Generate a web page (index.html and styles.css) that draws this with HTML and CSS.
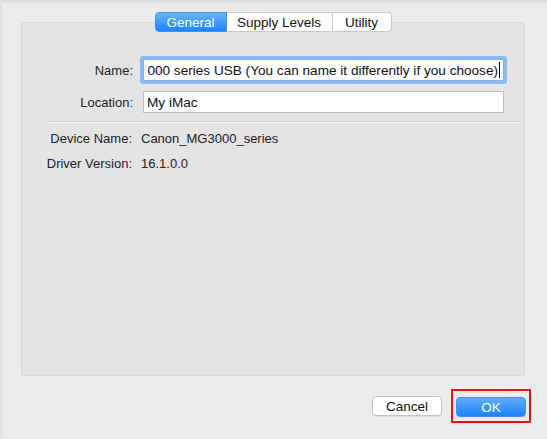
FILE: index.html
```html
<!DOCTYPE html>
<html lang="en">
  <head>
    <meta charset="UTF-8" />
    <meta name="viewport" content="width=device-width, initial-scale=1.0" />
    <title>Printer Options</title>
    <link rel="stylesheet" href="styles.css">
  </head>
  <body>
    <div class="window">
      <div class="tabs">
        <div class="tab active">General</div>
        <div class="tab supply">Supply Levels</div>
        <div class="tab utility">Utility</div>
      </div>
      <div class="panel">
        <div class="form">
          <label class="label">Name:</label>
          <div class="field focused">
            <div class="field-scroll"><span class="field-text" dir="ltr">Canon MG3000 series USB (You can name it differently if you choose)</span></div>
            <span class="caret"></span>
          </div>
          <label class="label">Location:</label>
          <div class="field">
            <span class="field-text start">My iMac</span>
          </div>
        </div>
        <div class="separator"></div>
        <div class="info">
          <div class="info-label">Device Name:</div>
          <div class="info-value">Canon_MG3000_series</div>
          <div class="info-label">Driver Version:</div>
          <div class="info-value">16.1.0.0</div>
        </div>
      </div>
      <div class="buttons">
        <button class="btn">Cancel</button>
        <div class="highlight">
          <button class="btn primary">OK</button>
        </div>
      </div>
    </div>
  </body>
</html>
```

FILE: styles.css
```css
html,
body {
  margin: 0;
  height: 100%;
}

body {
  font-family: "Liberation Sans", Arial, sans-serif;
  font-size: 13px;
  color: #222;
  background: #ececec;
}

.window {
  height: 439px;
  box-sizing: border-box;
  padding: 12px 0 0 21px;
  background: linear-gradient(#dcdcdc, #ececec 5px);
  box-shadow: inset 2px 0 0 #e3e3e3;
}

.tabs {
  display: flex;
  width: 504px;
  justify-content: center;
  margin-bottom: -10px;
  position: relative;
  z-index: 1;
}

.tab {
  width: 72px;
  height: 20px;
  line-height: 19px;
  text-align: center;
  white-space: nowrap;
  font-size: 13.5px;
  color: #111;
  background: #fff;
  border: 1px solid #c9c9c9;
  border-left: none;
  box-sizing: border-box;
}

.tab:first-child {
  border-left: 1px solid #c9c9c9;
  border-radius: 4px 0 0 4px;
}

.tab.supply {
  width: 106px;
}

.tab.utility {
  width: 59px;
  border-radius: 0 4px 4px 0;
}

.tab.active {
  color: #fff;
  background: linear-gradient(#6db4fb, #1b84fb);
  border-color: #3f92f5;
}

.panel {
  width: 504px;
  height: 354px;
  box-sizing: border-box;
  background: #e4e4e4;
  border: 1px solid #d9d9d9;
  border-radius: 3px;
  padding-top: 36px;
}

.form {
  display: grid;
  grid-template-columns: 111px 361px;
  column-gap: 10px;
  row-gap: 10px;
  align-items: center;
}

.label {
  text-align: right;
  color: #222;
}

.field {
  height: 22px;
  box-sizing: border-box;
  background: #fff;
  border: 1px solid #bdbdbd;
  display: flex;
  align-items: center;
  overflow: hidden;
  white-space: nowrap;
  padding: 0 3px;
  font-size: 13.6px;
  color: #111;
}

.field.focused {
  border-color: #84b3e8;
  box-shadow: 0 0 0 3px #8bbaf0;
  border-radius: 1px;
}

.field-scroll {
  flex: 1;
  min-width: 0;
  overflow: hidden;
  direction: rtl;
  text-align: right;
}

.field-scroll .field-text {
  unicode-bidi: isolate;
}

.caret {
  flex: none;
  width: 1px;
  height: 16px;
  margin-left: 1px;
  background: #000;
}

.separator {
  height: 1px;
  background: #d2d2d2;
  border-bottom: 1px solid #efefef;
  margin: 8px 0 8px 22px;
}

.info {
  display: grid;
  grid-template-columns: 110px auto;
  column-gap: 9px;
  row-gap: 9px;
  line-height: 16px;
}

.info-label {
  text-align: right;
}

.buttons {
  display: flex;
  justify-content: flex-end;
  align-items: center;
  width: 510px;
  margin-top: 13px;
}

.btn {
  width: 70px;
  height: 20px;
  padding: 0;
  font-family: inherit;
  font-size: 13.5px;
  color: #111;
  background: #fff;
  border: 1px solid #c4c4c4;
  border-radius: 4px;
  box-shadow: 0 1px 0 rgba(0, 0, 0, 0.05);
}

.highlight {
  margin-left: 9px;
  padding: 6px 3px 4px 3px;
  border: 2px solid #e3101a;
}

.btn.primary {
  color: #fff;
  background: linear-gradient(#64adfa, #1a82fb);
  border-color: #3d8ff5;
}
```
